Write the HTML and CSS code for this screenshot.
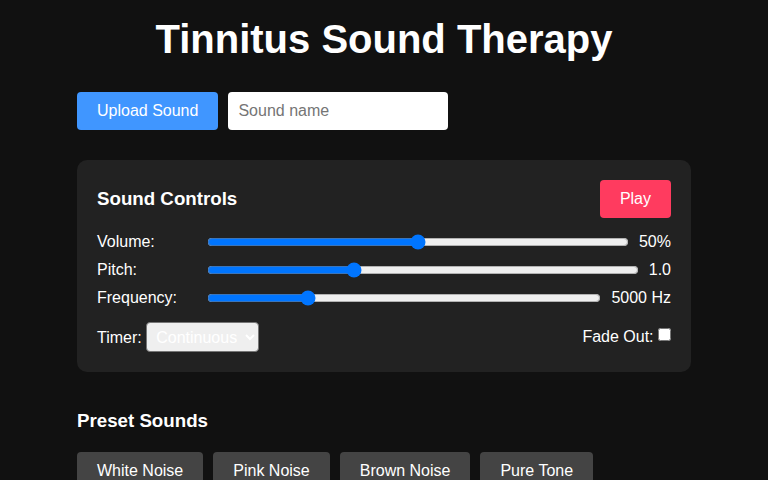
FILE: index.html
```html
<!DOCTYPE html>
<html>
<head>
<meta charset="utf-8">
<link rel="stylesheet" href="styles.css">
</head>
<body>
<div class="app">
  <h1 class="title">Tinnitus Sound Therapy</h1>
  <div class="upload">
    <button class="btn btn-blue">Upload Sound</button>
    <input class="name-input" type="text" placeholder="Sound name">
  </div>
  <div class="panel">
    <div class="panel-head">
      <h3 class="panel-title">Sound Controls</h3>
      <button class="btn btn-red">Play</button>
    </div>
    <div class="row">
      <span class="row-label">Volume:</span>
      <input class="slider" type="range" min="0" max="100" value="50">
      <span class="row-value">50%</span>
    </div>
    <div class="row">
      <span class="row-label">Pitch:</span>
      <input class="slider" type="range" min="0.5" max="2" step="0.1" value="1">
      <span class="row-value">1.0</span>
    </div>
    <div class="row">
      <span class="row-label">Frequency:</span>
      <input class="slider" type="range" min="100" max="20000" value="5000">
      <span class="row-value">5000 Hz</span>
    </div>
    <div class="options">
      <label class="timer">Timer: <select class="timer-select"><option>Continuous</option></select></label>
      <label class="fade">Fade Out: <input class="fade-check" type="checkbox"></label>
    </div>
  </div>
  <h3 class="section-title">Preset Sounds</h3>
  <div class="presets">
    <button class="btn btn-gray">White Noise</button>
    <button class="btn btn-gray">Pink Noise</button>
    <button class="btn btn-gray">Brown Noise</button>
    <button class="btn btn-gray">Pure Tone</button>
  </div>
</div>
</body>
</html>
```
FILE: styles.css
```css
html, body {
  margin: 0;
  padding: 0;
  background: #111111;
  color: #ffffff;
  font-family: "Liberation Sans", Arial, sans-serif;
  font-size: 16px;
}
.app {
  width: 614px;
  margin: 0 auto;
  padding-top: 16px;
}
.title {
  margin: 0 0 30px;
  text-align: center;
  font-size: 40px;
  line-height: 46px;
  font-weight: bold;
}
.upload {
  display: flex;
  gap: 10px;
  margin-bottom: 30px;
}
.btn {
  font-family: inherit;
  font-size: 16px;
  line-height: 18px;
  color: #ffffff;
  border: none;
  border-radius: 4px;
  padding: 10px 20px;
  cursor: pointer;
}
.btn-blue { background: #4096ff; }
.btn-red { background: #ff3b5f; }
.btn-gray { background: #444444; }
.name-input {
  width: 220px;
  box-sizing: border-box;
  height: 38px;
  border: none;
  border-radius: 4px;
  padding: 0 10px;
  font-family: inherit;
  font-size: 16px;
  background: #ffffff;
  color: #000;
}
.name-input::placeholder { color: #757575; }
.panel {
  background: #222222;
  border-radius: 10px;
  padding: 20px;
}
.panel-head {
  display: flex;
  justify-content: space-between;
  align-items: center;
  margin-bottom: 15px;
}
.panel-title, .section-title {
  margin: 0;
  font-size: 18.72px;
  line-height: 22px;
  font-weight: bold;
}
.row {
  display: flex;
  align-items: center;
  height: 18px;
  gap: 10px;
  margin-bottom: 10px;
}
.row-label {
  width: 100px;
  flex: none;
}
.slider {
  flex: 1;
  margin: 0;
  min-width: 0;
}
.row-value { flex: none; }
.options {
  display: flex;
  justify-content: space-between;
  align-items: center;
  margin-top: 15px;
}
.timer-select {
  font-family: inherit;
  font-size: 16px;
  height: 30px;
  padding: 0 5px;
  color: #ffffff;
  border-radius: 4px;
  margin: 0;
}
.fade-check { margin: 0; vertical-align: 1px; }
.section-title {
  margin: 38px 0 20px;
}
.presets {
  display: flex;
  gap: 10px;
}
```
